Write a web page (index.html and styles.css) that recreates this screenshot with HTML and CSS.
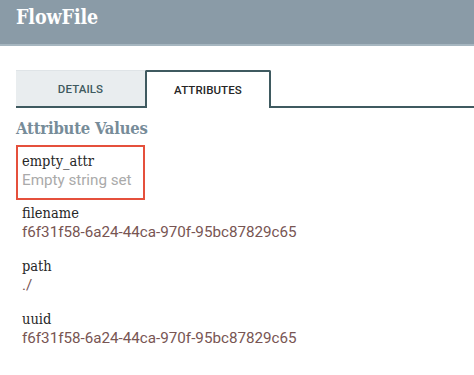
FILE: index.html
```html
<!DOCTYPE html>
<html>
<head>
<meta charset="utf-8">
<link rel="stylesheet" href="styles.css">
</head>
<body>
<header class="header"><h1 class="title">FlowFile</h1></header>
<div class="tabs">
  <div class="tab tab-inactive">DETAILS</div>
  <div class="tab tab-active">ATTRIBUTES</div>
  <div class="tab-fill"></div>
</div>
<h2 class="section">Attribute Values</h2>
<div class="attrs">
  <div class="attr highlight">
    <div class="name">empty_attr</div>
    <div class="value empty">Empty string set</div>
  </div>
  <div class="attr">
    <div class="name">filename</div>
    <div class="value">f6f31f58-6a24-44ca-970f-95bc87829c65</div>
  </div>
  <div class="attr">
    <div class="name">path</div>
    <div class="value">./</div>
  </div>
  <div class="attr">
    <div class="name">uuid</div>
    <div class="value">f6f31f58-6a24-44ca-970f-95bc87829c65</div>
  </div>
</div>
</body>
</html>
```
FILE: styles.css
```css
html, body { margin: 0; padding: 0; background: #fff; }
body { width: 474px; height: 375px; overflow: hidden; font-family: Roboto, "Liberation Sans", sans-serif; }
.header {
  height: 44px;
  background: #8a9ba7;
  border-bottom: 2px solid #a6b6c0;
  display: flex;
  align-items: center;
  padding-left: 16px;
}
.title {
  margin: 0 0 9px 0;
  font-family: "DejaVu Serif", serif;
  font-stretch: condensed;
  font-weight: bold;
  font-size: 19.5px;
  color: #fff;
  letter-spacing: -0.1px;
}
.tabs {
  display: flex;
  margin-top: 24px;
  padding-left: 16px;
  height: 38px;
}
.tab {
  box-sizing: border-box;
  height: 38px;
  display: flex;
  align-items: center;
  justify-content: center;
  font-size: 11.5px;
  font-weight: 500;
  letter-spacing: 0.1px;
}
.tab-inactive {
  width: 129px;
  background: #e9edef;
  border-top: 1px solid #dfe4e7;
  border-bottom: 2px solid #3f5a60;
  color: #3f5a60;
}
.tab-active {
  width: 126px;
  border: 2px solid #3f5a60;
  border-bottom: none;
  border-radius: 2px 2px 0 0;
  color: #262626;
}
.tab-fill {
  flex: 1;
  border-bottom: 2px solid #3f5a60;
}
.section {
  margin: 11px 0 6px 16px;
  font-family: "DejaVu Serif", serif;
  font-stretch: condensed;
  font-weight: bold;
  font-size: 16.5px;
  line-height: 20px;
  color: #778c99;
  letter-spacing: -0.2px;
}
.attrs { display: flex; flex-direction: column; align-items: flex-start; }
.attr {
  margin-left: 16px;
  padding: 0 6px;
  margin-bottom: 15px;
}
.attr.highlight {
  width: 129px;
  box-sizing: border-box;
  border: 2px solid #e5503c;
  padding: 5px 4px 8px;
  margin-bottom: 4px;
}
.name {
  font-family: "DejaVu Serif", serif;
  font-stretch: condensed;
  font-size: 14.5px;
  line-height: 19px;
  color: #262626;
}
.value {
  font-size: 15.2px;
  line-height: 19px;
  color: #785553;
}
.value.empty { color: #aaaaaa; }
```
